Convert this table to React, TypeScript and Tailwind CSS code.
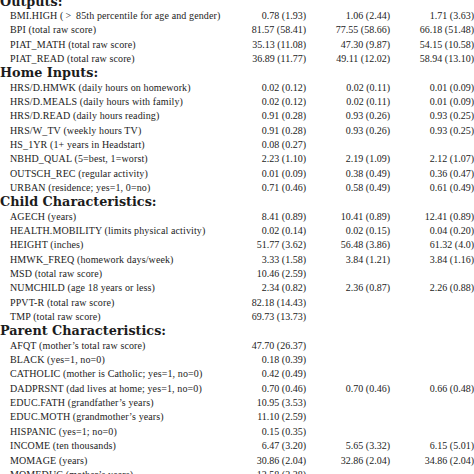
type Row = { label?: string; head?: string; v: string[] };

const rows: Row[] = [
  { head: "Outputs:", v: [] },
  { label: "BMI.HIGH (\u2009>\u2009 85th percentile for age and gender)", v: ["0.78 (1.93)", "1.06 (2.44)", "1.71 (3.63)"] },
  { label: "BPI (total raw score)", v: ["81.57 (58.41)", "77.55 (58.66)", "66.18 (51.48)"] },
  { label: "PIAT_MATH (total raw score)", v: ["35.13 (11.08)", "47.30 (9.87)", "54.15 (10.58)"] },
  { label: "PIAT_READ (total raw score)", v: ["36.89 (11.77)", "49.11 (12.02)", "58.94 (13.10)"] },
  { head: "Home Inputs:", v: [] },
  { label: "HRS/D.HMWK (daily hours on homework)", v: ["0.02 (0.12)", "0.02 (0.11)", "0.01 (0.09)"] },
  { label: "HRS/D.MEALS (daily hours with family)", v: ["0.02 (0.12)", "0.02 (0.11)", "0.01 (0.09)"] },
  { label: "HRS/D.READ (daily hours reading)", v: ["0.91 (0.28)", "0.93 (0.26)", "0.93 (0.25)"] },
  { label: "HRS/W_TV (weekly hours TV)", v: ["0.91 (0.28)", "0.93 (0.26)", "0.93 (0.25)"] },
  { label: "HS_1YR (1+ years in Headstart)", v: ["0.08 (0.27)", "", ""] },
  { label: "NBHD_QUAL (5=best, 1=worst)", v: ["2.23 (1.10)", "2.19 (1.09)", "2.12 (1.07)"] },
  { label: "OUTSCH_REC (regular activity)", v: ["0.01 (0.09)", "0.38 (0.49)", "0.36 (0.47)"] },
  { label: "URBAN (residence; yes=1, 0=no)", v: ["0.71 (0.46)", "0.58 (0.49)", "0.61 (0.49)"] },
  { head: "Child Characteristics:", v: [] },
  { label: "AGECH (years)", v: ["8.41 (0.89)", "10.41 (0.89)", "12.41 (0.89)"] },
  { label: "HEALTH.MOBILITY (limits physical activity)", v: ["0.02 (0.14)", "0.02 (0.15)", "0.04 (0.20)"] },
  { label: "HEIGHT (inches)", v: ["51.77 (3.62)", "56.48 (3.86)", "61.32 (4.0)"] },
  { label: "HMWK_FREQ (homework days/week)", v: ["3.33 (1.58)", "3.84 (1.21)", "3.84 (1.16)"] },
  { label: "MSD (total raw score)", v: ["10.46 (2.59)", "", ""] },
  { label: "NUMCHILD (age 18 years or less)", v: ["2.34 (0.82)", "2.36 (0.87)", "2.26 (0.88)"] },
  { label: "PPVT-R (total raw score)", v: ["82.18 (14.43)", "", ""] },
  { label: "TMP (total raw score)", v: ["69.73 (13.73)", "", ""] },
  { head: "Parent Characteristics:", v: [] },
  { label: "AFQT (mother’s total raw score)", v: ["47.70 (26.37)", "", ""] },
  { label: "BLACK (yes=1, no=0)", v: ["0.18 (0.39)", "", ""] },
  { label: "CATHOLIC (mother is Catholic; yes=1, no=0)", v: ["0.42 (0.49)", "", ""] },
  { label: "DADPRSNT (dad lives at home; yes=1, no=0)", v: ["0.70 (0.46)", "0.70 (0.46)", "0.66 (0.48)"] },
  { label: "EDUC.FATH (grandfather’s years)", v: ["10.95 (3.53)", "", ""] },
  { label: "EDUC.MOTH (grandmother’s years)", v: ["11.10 (2.59)", "", ""] },
  { label: "HISPANIC (yes=1; no=0)", v: ["0.15 (0.35)", "", ""] },
  { label: "INCOME (ten thousands)", v: ["6.47 (3.20)", "5.65 (3.32)", "6.15 (5.01)"] },
  { label: "MOMAGE (years)", v: ["30.86 (2.04)", "32.86 (2.04)", "34.86 (2.04)"] },
  { label: "MOMEDUC (mother’s years)", v: ["12.58 (2.28)", "", ""] },
];

export default function App() {
  return (
    <div className="w-[474px] h-[474px] overflow-hidden bg-white text-[#1c1c1c]">
      <div className="mt-[-5.5px] w-[474px] font-['Liberation_Serif',serif] text-[10px]">
        {rows.map((r, i) =>
          r.head ? (
            <div
              key={i}
              className="h-[14.35px] leading-[14.35px] whitespace-nowrap font-['DejaVu_Serif',serif] font-bold text-[12.8px]"
            >
              {r.head}
            </div>
          ) : (
            <div key={i} className="flex h-[14.35px] items-center whitespace-nowrap leading-[14.35px]">
              <div className="w-[250px] pl-[10px] tracking-[0.12px]">{r.label}</div>
              <div className="w-[56px] text-right">{r.v[0]}</div>
              <div className="w-[84px] text-right">{r.v[1]}</div>
              <div className="w-[84px] text-right">{r.v[2]}</div>
            </div>
          )
        )}
      </div>
    </div>
  );
}
